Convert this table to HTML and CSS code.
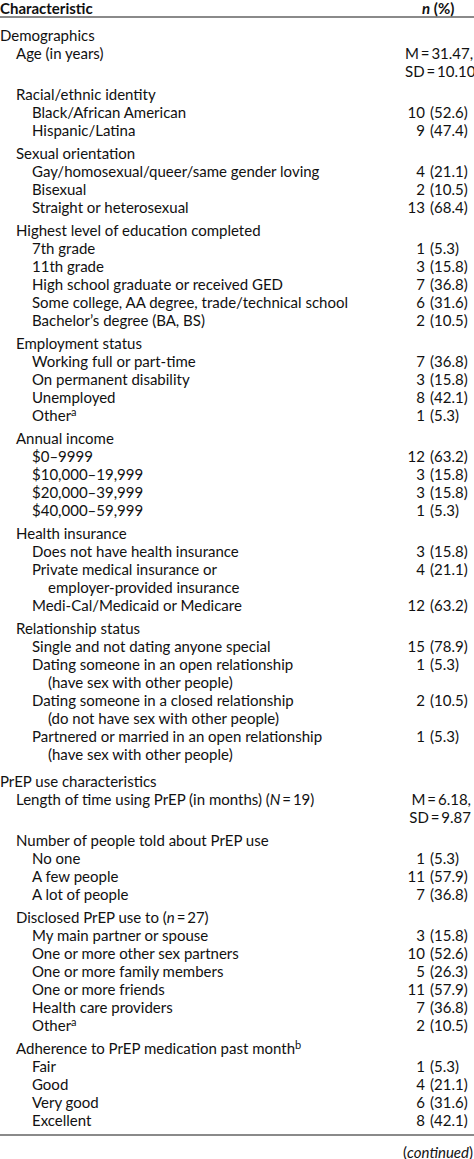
FILE: index.html
```html
<!DOCTYPE html>
<html lang="en">
<head>
<meta charset="utf-8">
<title>Participant characteristics</title>
<link rel="stylesheet" href="styles.css">
</head>
<body>
<div class="table">
  <div class="row head">
    <div class="lab">Characteristic</div>
    <div class="hval"><i>n</i> (%)</div>
  </div>
  <div class="body">
    <div class="row l0"><div class="lab">Demographics</div></div>
    <div class="row l1"><div class="lab">Age (in years)</div><div class="stat wide">M&thinsp;=&thinsp;31.47,<br>SD&thinsp;=&thinsp;10.10</div></div>

    <div class="row l1 gap"><div class="lab">Racial/ethnic identity</div></div>
    <div class="row l2"><div class="lab">Black/African American</div><div class="cnt">10</div><div class="pct">(52.6)</div></div>
    <div class="row l2"><div class="lab">Hispanic/Latina</div><div class="cnt">9</div><div class="pct">(47.4)</div></div>

    <div class="row l1 gap"><div class="lab">Sexual orientation</div></div>
    <div class="row l2"><div class="lab">Gay/homosexual/queer/same gender loving</div><div class="cnt">4</div><div class="pct">(21.1)</div></div>
    <div class="row l2"><div class="lab">Bisexual</div><div class="cnt">2</div><div class="pct">(10.5)</div></div>
    <div class="row l2"><div class="lab">Straight or heterosexual</div><div class="cnt">13</div><div class="pct">(68.4)</div></div>

    <div class="row l1 gap"><div class="lab">Highest level of education completed</div></div>
    <div class="row l2"><div class="lab">7th grade</div><div class="cnt">1</div><div class="pct">(5.3)</div></div>
    <div class="row l2"><div class="lab">11th grade</div><div class="cnt">3</div><div class="pct">(15.8)</div></div>
    <div class="row l2"><div class="lab">High school graduate or received GED</div><div class="cnt">7</div><div class="pct">(36.8)</div></div>
    <div class="row l2"><div class="lab">Some college, AA degree, trade/technical school</div><div class="cnt">6</div><div class="pct">(31.6)</div></div>
    <div class="row l2"><div class="lab">Bachelor’s degree (BA, BS)</div><div class="cnt">2</div><div class="pct">(10.5)</div></div>

    <div class="row l1 gap"><div class="lab">Employment status</div></div>
    <div class="row l2"><div class="lab">Working full or part-time</div><div class="cnt">7</div><div class="pct">(36.8)</div></div>
    <div class="row l2"><div class="lab">On permanent disability</div><div class="cnt">3</div><div class="pct">(15.8)</div></div>
    <div class="row l2"><div class="lab">Unemployed</div><div class="cnt">8</div><div class="pct">(42.1)</div></div>
    <div class="row l2"><div class="lab">Other<sup>a</sup></div><div class="cnt">1</div><div class="pct">(5.3)</div></div>

    <div class="row l1 gap"><div class="lab">Annual income</div></div>
    <div class="row l2"><div class="lab">$0–9999</div><div class="cnt">12</div><div class="pct">(63.2)</div></div>
    <div class="row l2"><div class="lab">$10,000–19,999</div><div class="cnt">3</div><div class="pct">(15.8)</div></div>
    <div class="row l2"><div class="lab">$20,000–39,999</div><div class="cnt">3</div><div class="pct">(15.8)</div></div>
    <div class="row l2"><div class="lab">$40,000–59,999</div><div class="cnt">1</div><div class="pct">(5.3)</div></div>

    <div class="row l1 gap"><div class="lab">Health insurance</div></div>
    <div class="row l2"><div class="lab">Does not have health insurance</div><div class="cnt">3</div><div class="pct">(15.8)</div></div>
    <div class="row l2"><div class="lab">Private medical insurance or<br>employer-provided insurance</div><div class="cnt">4</div><div class="pct">(21.1)</div></div>
    <div class="row l2"><div class="lab">Medi-Cal/Medicaid or Medicare</div><div class="cnt">12</div><div class="pct">(63.2)</div></div>

    <div class="row l1 gap"><div class="lab">Relationship status</div></div>
    <div class="row l2"><div class="lab">Single and not dating anyone special</div><div class="cnt">15</div><div class="pct">(78.9)</div></div>
    <div class="row l2"><div class="lab">Dating someone in an open relationship<br>(have sex with other people)</div><div class="cnt">1</div><div class="pct">(5.3)</div></div>
    <div class="row l2"><div class="lab">Dating someone in a closed relationship<br>(do not have sex with other people)</div><div class="cnt">2</div><div class="pct">(10.5)</div></div>
    <div class="row l2"><div class="lab">Partnered or married in an open relationship<br>(have sex with other people)</div><div class="cnt">1</div><div class="pct">(5.3)</div></div>

    <div class="row l0 gap-lg"><div class="lab">PrEP use characteristics</div></div>
    <div class="row l1"><div class="lab">Length of time using PrEP (in months) (<i>N</i>&thinsp;=&thinsp;19)</div><div class="stat right">M&thinsp;=&thinsp;6.18,<br>SD&thinsp;=&thinsp;9.87</div></div>

    <div class="row l1 gap"><div class="lab">Number of people told about PrEP use</div></div>
    <div class="row l2"><div class="lab">No one</div><div class="cnt">1</div><div class="pct">(5.3)</div></div>
    <div class="row l2"><div class="lab">A few people</div><div class="cnt">11</div><div class="pct">(57.9)</div></div>
    <div class="row l2"><div class="lab">A lot of people</div><div class="cnt">7</div><div class="pct">(36.8)</div></div>

    <div class="row l1 gap"><div class="lab">Disclosed PrEP use to (<i>n</i>&thinsp;=&thinsp;27)</div></div>
    <div class="row l2"><div class="lab">My main partner or spouse</div><div class="cnt">3</div><div class="pct">(15.8)</div></div>
    <div class="row l2"><div class="lab">One or more other sex partners</div><div class="cnt">10</div><div class="pct">(52.6)</div></div>
    <div class="row l2"><div class="lab">One or more family members</div><div class="cnt">5</div><div class="pct">(26.3)</div></div>
    <div class="row l2"><div class="lab">One or more friends</div><div class="cnt">11</div><div class="pct">(57.9)</div></div>
    <div class="row l2"><div class="lab">Health care providers</div><div class="cnt">7</div><div class="pct">(36.8)</div></div>
    <div class="row l2"><div class="lab">Other<sup>a</sup></div><div class="cnt">2</div><div class="pct">(10.5)</div></div>

    <div class="row l1 gap"><div class="lab">Adherence to PrEP medication past month<sup>b</sup></div></div>
    <div class="row l2"><div class="lab">Fair</div><div class="cnt">1</div><div class="pct">(5.3)</div></div>
    <div class="row l2"><div class="lab">Good</div><div class="cnt">4</div><div class="pct">(21.1)</div></div>
    <div class="row l2"><div class="lab">Very good</div><div class="cnt">6</div><div class="pct">(31.6)</div></div>
    <div class="row l2"><div class="lab">Excellent</div><div class="cnt">8</div><div class="pct">(42.1)</div></div>
  </div>
  <div class="cont">(<i>continued</i>)</div>
</div>
</body>
</html>
```

FILE: styles.css
```css
html, body {
  margin: 0;
  padding: 0;
  background: #ffffff;
}
body {
  width: 474px;
  overflow: hidden;
  font-family: Lato, "Open Sans", "Liberation Sans", sans-serif;
  font-size: 15px;
  line-height: 18px;
  color: #111111;
}
.table {
  width: 474px;
}
.row {
  display: grid;
  grid-template-columns: 1fr 40px 49px;
}
.head {
  font-weight: 700;
  line-height: 16px;
  border-bottom: 2px solid #8a8a8a;
}
.hval {
  grid-column: 2 / 4;
  padding-left: 37px;
  white-space: nowrap;
}
.body {
  padding-top: 8px;
  padding-bottom: 5px;
  border-bottom: 2px solid #8a8a8a;
}
.lab {
  grid-column: 1;
  white-space: nowrap;
}
.l0 .lab { padding-left: 0; }
.l1 .lab { padding-left: 16px; }
.l2 .lab {
  padding-left: 48px;
  text-indent: -16px;
}
.cnt {
  grid-column: 2;
  text-align: right;
}
.pct {
  grid-column: 3;
  padding-left: 5px;
  white-space: nowrap;
}
.stat {
  grid-column: 2 / 4;
  white-space: nowrap;
}
.stat.wide {
  padding-left: 20px;
}
.stat.right {
  text-align: right;
  padding-right: 3px;
}
.gap { margin-top: 5px; }
.gap-lg { margin-top: 9px; }
sup {
  font-size: 11px;
  line-height: 0;
  vertical-align: 5px;
}
.cont {
  text-align: right;
  margin-top: 7px;
  padding-right: 1px;
}
```
